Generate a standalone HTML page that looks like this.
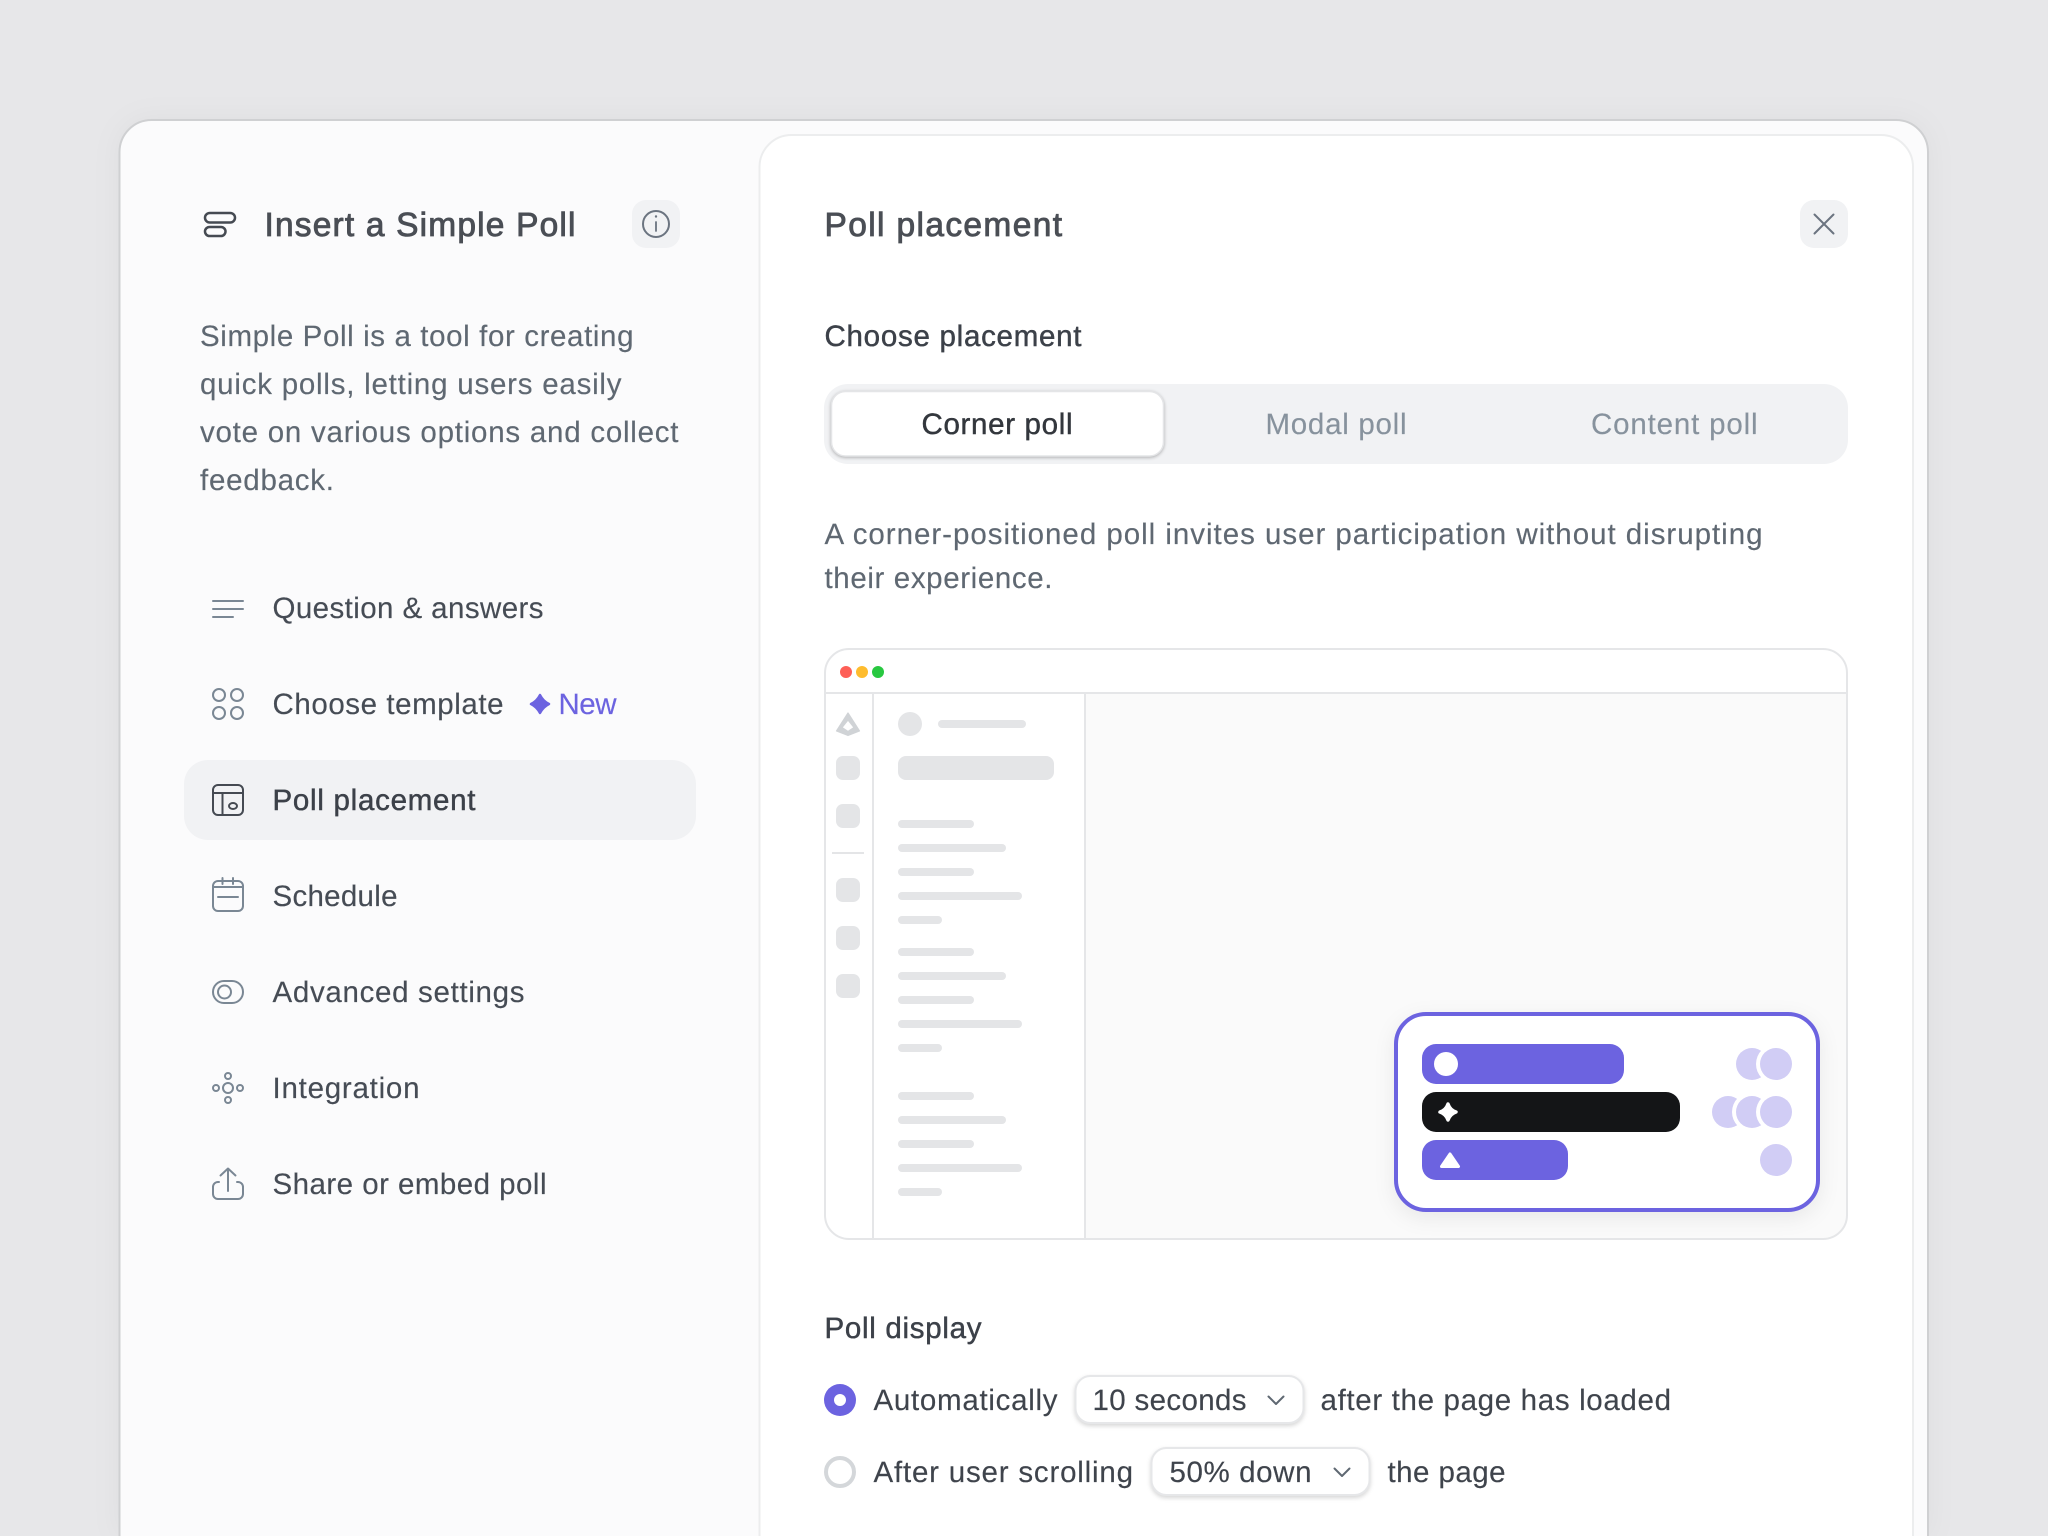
<!DOCTYPE html>
<html lang="en">
<head>
<meta charset="utf-8">
<title>Insert a Simple Poll</title>
<style>
html,body{margin:0;padding:0;width:2048px;height:1536px;overflow:hidden;background:#e7e7e9}
svg{display:block;width:2048px;height:1536px;overflow:hidden}
text{font-family:"Liberation Sans",sans-serif;font-size:29.5px;fill:#464c55;stroke:#464c55;stroke-width:.15px;text-rendering:geometricPrecision}
.h{font-size:33.5px;fill:#4a4e55;stroke:#4a4e55;stroke-width:.85px}
.m{fill:#3c4149;stroke:#3c4149;stroke-width:.45px}
.p{fill:#5f6872;stroke:#5f6872}
.d{fill:#3f444c;stroke:#3f444c}
.g{fill:#87929d;stroke:#87929d}
.i{fill:none;stroke:#7a8794;stroke-width:2;stroke-linecap:round;stroke-linejoin:round}
.a{fill:none;stroke:#454a52;stroke-width:2;stroke-linecap:round;stroke-linejoin:round}
.av{fill:#d1cdf5}
.ctl{fill:#fff;stroke:#e6e7e9;stroke-width:2;filter:drop-shadow(0 2px 2px rgba(0,0,0,.16))}
</style>
</head>
<body>
<svg width="2048" height="1536" viewBox="0 0 2048 1536" xmlns="http://www.w3.org/2000/svg">
<rect width="2048" height="1536" fill="#e7e7e9"/>
<path d="M119.500 1536V152a32 32 0 0 1 32-32H1896a32 32 0 0 1 32 32V1536" fill="#fbfbfc" stroke="#cfd0d2" stroke-width="2" style="filter:drop-shadow(0 0 14px rgba(0,0,0,.04))"/>
<path d="M759.500 1536V167a32 32 0 0 1 32-32H1881a32 32 0 0 1 32 32V1536" fill="#fff" stroke="#ecedee" stroke-width="2"/>

<!-- left header -->
<rect x="205" y="213" width="30" height="9.500" rx="4.750" class="a" style="stroke-width:2.500"/>
<rect x="205" y="227" width="20.500" height="9" rx="4.500" class="a" style="stroke-width:2.500"/>
<text class="h" x="264.500" y="236" textLength="311">Insert a Simple Poll</text>
<rect x="632" y="200" width="48" height="48" rx="14" fill="#f1f2f4"/>
<circle cx="656" cy="224" r="13" fill="none" stroke="#6b7480" stroke-width="2"/>
<path d="M656 222v9" stroke="#6b7480" stroke-width="1.800" stroke-linecap="round"/>
<circle cx="656" cy="216.500" r="1.200" fill="#6b7480"/>

<text class="p" x="200" y="346" textLength="433.500">Simple Poll is a tool for creating</text>
<text class="p" x="200" y="394" textLength="421.500">quick polls, letting users easily</text>
<text class="p" x="200" y="442" textLength="478.500">vote on various options and collect</text>
<text class="p" x="200" y="490" textLength="134">feedback.</text>

<!-- nav -->
<path class="i" d="M213 601h30M213 609h30M213 617h20"/>
<text x="272.500" y="618" textLength="271">Question &amp; answers</text>

<g class="i"><circle cx="219" cy="695" r="6"/><circle cx="237" cy="695" r="6"/><circle cx="219" cy="713" r="6"/><circle cx="237" cy="713" r="6"/></g>
<text x="272.500" y="714" textLength="231">Choose template</text>
<path d="M540 695Q543 701 549 704Q543 707 540 713Q537 707 531 704Q537 701 540 695Z" fill="#6c63e0" stroke="#6c63e0" stroke-width="2.500" stroke-linejoin="round"/>
<text x="558.500" y="714" textLength="58" style="fill:#6c63e0;stroke:#6c63e0">New</text>

<rect x="184" y="760" width="512" height="80" rx="24" fill="#f1f2f4"/>
<g class="a">
<rect x="213" y="785" width="30" height="30" rx="5"/>
<path d="M213 793h30M222.500 793v22"/>
<ellipse cx="233" cy="806" rx="4" ry="3"/>
</g>
<text class="m" x="272.500" y="810" textLength="203">Poll placement</text>

<g class="i">
<rect x="213" y="881" width="30" height="30" rx="5"/>
<path d="M213 887h30M222.500 878v6M233 878v6M218 897h20"/>
</g>
<text x="272.500" y="906" textLength="125">Schedule</text>

<g class="i">
<rect x="213" y="981" width="30" height="22" rx="11"/>
<circle cx="224.500" cy="992" r="6.500"/>
</g>
<text x="272.500" y="1002" textLength="252">Advanced settings</text>

<g class="i">
<circle cx="228" cy="1088" r="5"/>
<circle cx="228" cy="1076" r="3"/>
<circle cx="228" cy="1100" r="3"/>
<circle cx="216" cy="1088" r="3"/>
<circle cx="240" cy="1088" r="3"/>
</g>
<text x="272.500" y="1098" textLength="147">Integration</text>

<g class="i">
<path d="M219 1182h-1a5 5 0 0 0-5 5v7a5 5 0 0 0 5 5h20a5 5 0 0 0 5-5v-7a5 5 0 0 0-5-5h-1"/>
<path d="M228 1191V1169M220.500 1175.500L228 1168.500L235.500 1175.500"/>
</g>
<text x="272.500" y="1194" textLength="274">Share or embed poll</text>

<!-- right panel -->
<text class="h" x="824.500" y="236" textLength="237.500">Poll placement</text>
<rect x="1800" y="200" width="48" height="48" rx="14" fill="#f1f2f4"/>
<path d="M1814.500 214.500l19 19M1833.500 214.500l-19 19" stroke="#6b7480" stroke-width="2" stroke-linecap="round"/>

<text class="m" x="824.500" y="346" textLength="257">Choose placement</text>

<rect x="824" y="384" width="1024" height="80" rx="24" fill="#f1f2f4"/>
<rect x="831.500" y="391.500" width="332" height="64.500" rx="14" fill="#fff" stroke="#e4e5e7" stroke-width="1.500" style="filter:drop-shadow(0 1.500px 1.500px rgba(0,0,0,.28))"/>
<text class="m" x="921.500" y="434" textLength="151" style="fill:#33373d;stroke:#33373d">Corner poll</text>
<text class="g" x="1265.500" y="434" textLength="141">Modal poll</text>
<text class="g" x="1591" y="434" textLength="166.500">Content poll</text>

<text class="p" x="824.500" y="544" textLength="938">A corner-positioned poll invites user participation without disrupting</text>
<text class="p" x="824.500" y="588" textLength="228">their experience.</text>

<!-- preview -->
<rect x="825" y="649" width="1022" height="590" rx="24" fill="#fff"/>
<path d="M1085 693H1847V1215a24 24 0 0 1-24 24H1085Z" fill="#fafafa"/>
<rect x="825" y="649" width="1022" height="590" rx="24" fill="none" stroke="#e5e6e8" stroke-width="2"/>
<path d="M825 693H1847M873 693V1239M1085 693V1239" stroke="#e5e6e8" stroke-width="2" fill="none"/>
<circle cx="846" cy="672" r="6" fill="#fe5f57"/>
<circle cx="862" cy="672" r="6" fill="#febc2e"/>
<circle cx="878" cy="672" r="6" fill="#28c840"/>
<path fill-rule="evenodd" d="M848 713L859.500 731L848 735.500L836.500 731ZM848 720L842 727.500L848 731.500L854 727.500Z" fill="#d0d3d6" stroke="#d0d3d6" stroke-width="1.200" stroke-linejoin="round"/>
<g fill="#e4e5e7">
<rect x="836" y="756" width="24" height="24" rx="7"/>
<rect x="836" y="804" width="24" height="24" rx="7"/>
<rect x="832" y="852" width="32" height="2"/>
<rect x="836" y="878" width="24" height="24" rx="7"/>
<rect x="836" y="926" width="24" height="24" rx="7"/>
<rect x="836" y="974" width="24" height="24" rx="7"/>
<circle cx="910" cy="724" r="12"/>
<rect x="938" y="720" width="88" height="8" rx="4"/>
<rect x="898" y="756" width="156" height="24" rx="8"/>
<rect x="898" y="820" width="76" height="8" rx="4"/>
<rect x="898" y="844" width="108" height="8" rx="4"/>
<rect x="898" y="868" width="76" height="8" rx="4"/>
<rect x="898" y="892" width="124" height="8" rx="4"/>
<rect x="898" y="916" width="44" height="8" rx="4"/>
<rect x="898" y="948" width="76" height="8" rx="4"/>
<rect x="898" y="972" width="108" height="8" rx="4"/>
<rect x="898" y="996" width="76" height="8" rx="4"/>
<rect x="898" y="1020" width="124" height="8" rx="4"/>
<rect x="898" y="1044" width="44" height="8" rx="4"/>
<rect x="898" y="1092" width="76" height="8" rx="4"/>
<rect x="898" y="1116" width="108" height="8" rx="4"/>
<rect x="898" y="1140" width="76" height="8" rx="4"/>
<rect x="898" y="1164" width="124" height="8" rx="4"/>
<rect x="898" y="1188" width="44" height="8" rx="4"/>
</g>

<!-- widget -->
<rect x="1396" y="1014" width="422" height="196" rx="30" fill="#fff" stroke="#6c63e0" stroke-width="4" style="filter:drop-shadow(0 6px 10px rgba(0,0,0,.07))"/>
<rect x="1422" y="1044" width="202" height="40" rx="14" fill="#6c63e0"/>
<circle cx="1446" cy="1064" r="12" fill="#fff"/>
<rect x="1422" y="1092" width="258" height="40" rx="14" fill="#141517"/>
<path d="M1448 1104Q1450 1110 1456 1112Q1450 1114 1448 1120Q1446 1114 1440 1112Q1446 1110 1448 1104Z" fill="#fff" stroke="#fff" stroke-width="3.500" stroke-linejoin="round"/>
<rect x="1422" y="1140" width="146" height="40" rx="14" fill="#6c63e0"/>
<path d="M1450 1154L1458.500 1166.500H1441.500Z" fill="#fff" stroke="#fff" stroke-width="3" stroke-linejoin="round"/>

<circle class="av" cx="1752" cy="1064" r="16"/>
<circle cx="1776" cy="1064" r="20" fill="#fff"/>
<circle class="av" cx="1776" cy="1064" r="16"/>
<circle class="av" cx="1728" cy="1112" r="16"/>
<circle cx="1752" cy="1112" r="20" fill="#fff"/>
<circle class="av" cx="1752" cy="1112" r="16"/>
<circle cx="1776" cy="1112" r="20" fill="#fff"/>
<circle class="av" cx="1776" cy="1112" r="16"/>
<circle class="av" cx="1776" cy="1160" r="16"/>

<!-- poll display -->
<text class="m" x="824.500" y="1338" textLength="157">Poll display</text>

<circle cx="840" cy="1400" r="16" fill="#6c63e0"/>
<circle cx="840" cy="1400" r="6" fill="#fff"/>
<text class="d" x="873.500" y="1410" textLength="184">Automatically</text>
<rect class="ctl" x="1075.500" y="1376" width="228" height="47" rx="15"/>
<text class="d" x="1092.500" y="1410" textLength="154">10 seconds</text>
<path d="M1268.500 1396.500L1276 1404L1283.500 1396.500" fill="none" stroke="#5f6872" stroke-width="2" stroke-linecap="round" stroke-linejoin="round"/>
<text class="d" x="1320.500" y="1410" textLength="350.500">after the page has loaded</text>

<circle cx="840" cy="1472" r="14" fill="#fff" stroke="#d4d7da" stroke-width="4"/>
<text class="d" x="873.500" y="1482" textLength="259.500">After user scrolling</text>
<rect class="ctl" x="1151.500" y="1448" width="218" height="47" rx="15"/>
<text class="d" x="1169.500" y="1482" textLength="142">50% down</text>
<path d="M1334.500 1468.500L1342 1476L1349.500 1468.500" fill="none" stroke="#5f6872" stroke-width="2" stroke-linecap="round" stroke-linejoin="round"/>
<text class="d" x="1387.500" y="1482" textLength="118">the page</text>
</svg>
</body>
</html>
